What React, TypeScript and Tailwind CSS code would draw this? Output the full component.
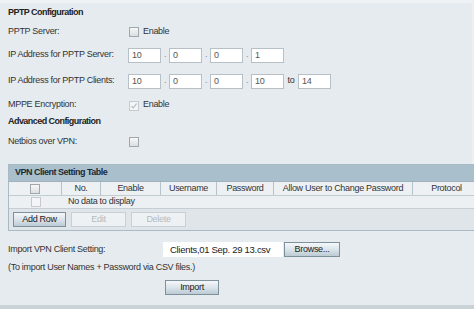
import React from "react";

const font = "font-['Liberation_Sans',Arial,sans-serif]";

const Box = ({ checked = false, disabled = false }: { checked?: boolean; disabled?: boolean }) => (
  <span
    className={`inline-flex w-[10px] h-[10px] items-center justify-center border ${
      disabled ? "border-[#c4cacf] bg-[#f3f5f6]" : "border-[#9ea8ae] bg-gradient-to-b from-[#f7f7f7] to-[#dcdfe1]"
    }`}
  >
    {checked && (
      <svg width="8" height="8" viewBox="0 0 8 8">
        <path d="M1.5 4.2 L3.2 6 L6.6 1.6" fill="none" stroke="#b3b9bd" strokeWidth="1.1" />
      </svg>
    )}
  </span>
);

const Field = ({ value, w = "w-[33px]" }: { value: string; w?: string }) => (
  <div className={`${w} h-[15px] bg-white border border-[#b7c0c6] pl-[3px] text-[9px] leading-[13px] text-[#555]`}>
    {value}
  </div>
);

const Dot = () => <span className="w-[8px] text-center text-[9px] text-[#888]">.</span>;

const Btn = ({ label, disabled = false, w }: { label: string; disabled?: boolean; w: string }) => (
  <div
    className={`${w} h-[15px] flex items-center justify-center border text-[9px] ${
      disabled
        ? "border-[#c8d0d5] bg-[#eef1f3] text-[#b3babf]"
        : "border-[#7d919d] bg-gradient-to-b from-[#f5f8fa] via-[#dbe4ea] to-[#bccbd4] text-[#222]"
    }`}
  >
    {label}
  </div>
);

const Row = ({ label, h, children }: { label: string; h: string; children?: React.ReactNode }) => (
  <div className={`flex items-center ${h}`}>
    <div className="w-[120px] text-[9px] text-[#333]">{label}</div>
    <div className="flex items-center">{children}</div>
  </div>
);

export default function App() {
  const cols = [
    { w: "w-[52px]", label: "" },
    { w: "w-[39px]", label: "No." },
    { w: "w-[60px]", label: "Enable" },
    { w: "w-[56px]", label: "Username" },
    { w: "w-[57px]", label: "Password" },
    { w: "w-[139px]", label: "Allow User to Change Password" },
    { w: "w-[68px]", label: "Protocol" },
  ];

  return (
    <div className={`${font} w-[474px] h-[309px] overflow-hidden bg-[#e5ebef] tracking-[-0.3px] flex flex-col`}>
      <div className="border-t-[3px] border-[#eef2f4] border-r-2 border-r-[#edf1f3] pl-[8px] pb-[8px]">
        <div className="h-[19px] flex items-center text-[9px] font-bold tracking-[-0.55px] text-[#222]">
          PPTP Configuration
        </div>
        <Row label="PPTP Server:" h="h-[20px]">
          <span className="ml-[1px]"><Box /></span>
          <span className="ml-[4px] text-[9px] text-[#333]">Enable</span>
        </Row>
        <Row label="IP Address for PPTP Server:" h="h-[26px]">
          <Field value="10" />
          <Dot />
          <Field value="0" />
          <Dot />
          <Field value="0" />
          <Dot />
          <Field value="1" />
        </Row>
        <Row label="IP Address for PPTP Clients:" h="h-[26px]">
          <Field value="10" />
          <Dot />
          <Field value="0" />
          <Dot />
          <Field value="0" />
          <Dot />
          <Field value="10" />
          <span className="w-[14px] text-center text-[9px] text-[#333]">to</span>
          <Field value="14" />
        </Row>
        <Row label="MPPE Encryption:" h="h-[22px]">
          <span className="ml-[1px]"><Box checked disabled /></span>
          <span className="ml-[4px] text-[9px] text-[#333]">Enable</span>
        </Row>
        <div className="h-[12px] flex items-center text-[9px] font-bold tracking-[-0.55px] text-[#222]">
          Advanced Configuration
        </div>
        <Row label="Netbios over VPN:" h="h-[28px]">
          <span className="ml-[1px]"><Box /></span>
        </Row>
      </div>

      <div className="ml-[8px] w-[480px] border border-[#a9bac5]">
        <div className="h-[16px] bg-[#a9bfcc] pl-[6px] flex items-center text-[9px] font-bold tracking-[-0.5px] text-[#1c2a33]">
          VPN Client Setting Table
        </div>
        <div className="flex h-[15px] bg-[#eef1f4] border-t border-[#9fb2be] border-b border-b-[#c2ccd3]">
          {cols.map((c, i) => (
            <div
              key={i}
              className={`${c.w} flex items-center justify-center text-[9px] text-[#333] ${i > 0 ? "border-l border-[#b7c3cb]" : ""}`}
            >
              {i === 0 ? <Box /> : c.label}
            </div>
          ))}
        </div>
        <div className="flex items-center h-[13px] bg-[#edf0f3] border-b border-[#c5cfd5]">
          <div className="w-[52px] flex justify-center pl-[2px]"><Box disabled /></div>
          <span className="ml-[7px] text-[9px] text-[#333]">No data to display</span>
        </div>
        <div className="flex items-center gap-[5px] h-[21px] bg-[#dfe5e9] pl-[4px]">
          <Btn label="Add Row" w="w-[53px]" />
          <Btn label="Edit" disabled w="w-[55px]" />
          <Btn label="Delete" disabled w="w-[55px]" />
        </div>
      </div>

      <div className="pl-[8px] flex-1 flex flex-col">
        <div className="flex items-center h-[15px] mt-[11px]">
          <span className="w-[155px] text-[9px] text-[#333]">Import VPN Client Setting:</span>
          <div className="w-[120px] h-[15px] bg-white pl-[7px] text-[9.5px] leading-[15px] text-[#222]">
            Clients,01 Sep. 29 13.csv
          </div>
          <div className="ml-[1px]"><Btn label="Browse..." w="w-[56px]" /></div>
        </div>
        <div className="h-[11px] mt-[5px] flex items-center text-[9px] text-[#333]">
          (To import User Names + Password via CSV files.)
        </div>
        <div className="ml-[157px] mt-[7px]"><Btn label="Import" w="w-[54px]" /></div>
        <div className="flex-1" />
      </div>
      <div className="h-[4px] bg-[#c8d2d7]" />
    </div>
  );
}
